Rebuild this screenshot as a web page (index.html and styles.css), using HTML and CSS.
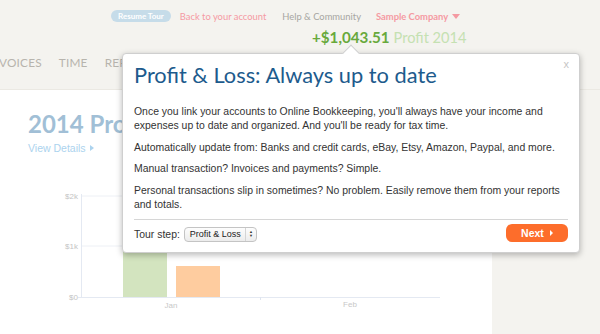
FILE: index.html
```html
<!DOCTYPE html>
<html>
<head>
<meta charset="utf-8">
<link rel="stylesheet" href="styles.css">
</head>
<body>
<div class="page">
  <div class="top">
    <div class="toplinks">
      <span class="pill">Resume Tour</span>
      <span class="back">Back to your account</span>
      <span class="help">Help &amp; Community</span>
      <span class="company">Sample Company <span class="caret"></span></span>
    </div>
    <div class="profit"><span class="amount">+$1,043.51</span> <span class="plabel">Profit 2014</span></div>
    <div class="nav">
      <span class="navitem first">VOICES</span>
      <span class="navitem">TIME</span>
      <span class="navitem">REPORTS</span>
    </div>
  </div>
  <div class="main">
    <div class="panel">
      <div class="head">
        <h1 class="title">2014 Profit &amp; Loss</h1>
        <a class="details">View Details <span class="tri"></span></a>
      </div>
      <svg class="chart" width="492" height="154" viewBox="0 0 492 154">
        <line x1="81" y1="17" x2="440" y2="17" stroke="#edf0f5" stroke-width="1"/>
        <line x1="81" y1="67" x2="440" y2="67" stroke="#edf0f5" stroke-width="1"/>
        <line x1="81.5" y1="15" x2="81.5" y2="119" stroke="#e4e9f2" stroke-width="1"/>
        <rect x="123" y="30" width="44" height="88" fill="#d3e4bf"/>
        <rect x="176" y="87" width="44" height="31" fill="#fecc9f"/>
        <line x1="78" y1="118.5" x2="440" y2="118.5" stroke="#e4e9f2" stroke-width="1"/>
        <line x1="260.5" y1="118" x2="260.5" y2="121" stroke="#dfe5ef" stroke-width="1"/>
        <text x="78" y="20" class="ylab" text-anchor="end">$2k</text>
        <text x="78" y="70" class="ylab" text-anchor="end">$1k</text>
        <text x="78" y="121" class="ylab" text-anchor="end">$0</text>
        <text x="171" y="129" class="xlab" text-anchor="middle">Jan</text>
        <text x="350" y="128" class="xlab" text-anchor="middle">Feb</text>
      </svg>
    </div>
    <div class="side"></div>
  </div>

  <div class="popover">
    <div class="arrow"></div>
    <div class="close">x</div>
    <h2 class="ptitle">Profit &amp; Loss: Always up to date</h2>
    <div class="pbody">
      <p>Once you link your accounts to Online Bookkeeping, you'll always have your income and expenses up to date and organized. And you'll be ready for tax time.</p>
      <p>Automatically update from: Banks and credit cards, eBay, Etsy, Amazon, Paypal, and more.</p>
      <p>Manual transaction? Invoices and payments? Simple.</p>
      <p>Personal transactions slip in sometimes? No problem. Easily remove them from your reports and totals.</p>
    </div>
    <div class="pfoot">
      <div class="step">
        <span class="steplabel">Tour step:</span>
        <span class="select"><span class="selval">Profit &amp; Loss</span><span class="selarrows">&#9650;<br>&#9660;</span></span>
      </div>
      <span class="next">Next <span class="ntri"></span></span>
    </div>
  </div>
</div>
</body>
</html>
```
FILE: styles.css
```css
* { box-sizing: border-box; }
html, body { margin: 0; padding: 0; }
body {
  width: 600px;
  height: 334px;
  overflow: hidden;
  background: #f4f3ef;
  font-family: "Liberation Sans", Arial, sans-serif;
}
.page {
  position: relative;
  width: 600px;
  height: 334px;
  overflow: hidden;
}
.top {
  height: 90px;
  background: #f4f3ef;
  border-bottom: 1px solid #ebe9e3;
}
.toplinks {
  display: flex;
  align-items: center;
  height: 32px;
  padding-left: 111px;
  font-family: Lato, "Open Sans", sans-serif;
  font-size: 9.4px;
}
.pill {
  background: #c6dce9;
  color: #fff;
  font-weight: 700;
  font-size: 8px;
  border-radius: 7px;
  padding: 0 7px;
  height: 12px;
  line-height: 12px;
  margin-right: 9px;
}
.back { color: #f59aa3; margin-right: 16px; }
.help { color: #a7a6a2; margin-right: 15px; }
.company { color: #f49aa2; font-weight: 700; display: flex; align-items: center; }
.caret {
  display: inline-block;
  width: 0; height: 0;
  border-left: 4px solid transparent;
  border-right: 4px solid transparent;
  border-top: 5px solid #f49aa2;
  margin-left: 4px;
}
.profit {
  margin-top: -6px;
  padding-left: 312px;
  font-family: Lato, "Open Sans", sans-serif;
  font-size: 15.2px;
  height: 22px;
  line-height: 22px;
}
.amount { color: #68a93c; font-weight: 700; }
.plabel { color: #c5e1b2; font-size: 14.6px; }
.nav {
  display: flex;
  gap: 17px;
  white-space: nowrap;
  margin-top: 7px;
  font-family: Lato, "Open Sans", sans-serif;
  font-size: 11.8px;
  color: #b7b4ad;
  letter-spacing: 0.2px;
}
.navitem.first { margin-left: -1px; }
.main {
  display: flex;
  height: 244px;
}
.panel {
  width: 492px;
  background: #fff;
}
.side { flex: 1; background: #f4f3ef; }
.head {
  padding: 20px 0 0 28px;
  height: 89px;
  white-space: nowrap;
}
.title {
  margin: 0;
  font-family: Lato, "Open Sans", sans-serif;
  font-weight: 700;
  font-size: 24px;
  line-height: 28px;
  color: #a1bfd6;
}
.details {
  display: inline-flex;
  align-items: center;
  margin-top: 4px;
  font-size: 10.5px;
  color: #acd3ee;
}
.tri {
  display: inline-block;
  width: 0; height: 0;
  border-top: 3px solid transparent;
  border-bottom: 3px solid transparent;
  border-left: 4px solid #acd3ee;
  margin-left: 4px;
}
.chart { display: block; }
.ylab { font-family: "Liberation Sans", Arial, sans-serif; font-size: 8px; fill: #c4c4c4; }
.xlab { font-family: "Liberation Sans", Arial, sans-serif; font-size: 8px; fill: #c8c8c8; }

.popover {
  position: absolute;
  left: 122px;
  top: 53px;
  width: 458px;
  height: 200px;
  background: #fff;
  border: 1px solid #cfcfcf;
  border-radius: 4px;
  box-shadow: 0 2px 6px rgba(0,0,0,0.28);
  padding: 0 11px 0 11px;
}
.arrow {
  position: absolute;
  left: 222px;
  top: -7px;
  width: 12px;
  height: 12px;
  background: #fff;
  border-left: 1px solid #cfcfcf;
  border-top: 1px solid #cfcfcf;
  transform: rotate(45deg);
}
.close {
  position: absolute;
  right: 10px;
  top: 4px;
  font-family: "Liberation Sans", Arial, sans-serif;
  font-size: 11px;
  color: #c6c6c6;
}
.ptitle {
  margin: 0;
  padding-top: 8px;
  font-family: Lato, "Open Sans", sans-serif;
  font-weight: 400;
  font-size: 21.8px;
  line-height: 26px;
  color: #1d5b8d;
}
.pbody {
  margin-top: 17px;
  font-size: 10.45px;
  line-height: 14px;
  color: #333;
}
.pbody p { margin: 0 0 7.5px 0; }
.pfoot {
  border-top: 1px solid #d6d6d6;
  margin-top: 5px;
  padding-top: 5px;
  display: flex;
  justify-content: space-between;
  align-items: center;
}
.step { display: flex; align-items: center; font-size: 10.45px; color: #333; padding-top: 1px; }
.steplabel { margin-right: 4px; }
.select {
  display: inline-flex;
  align-items: stretch;
  height: 15px;
  border: 1px solid #c4c4c4;
  border-radius: 4px;
  background: linear-gradient(#fdfdfd, #ececec);
  font-size: 9px;
  color: #222;
}
.selval { padding: 0 4px 0 5px; line-height: 13px; }
.selarrows {
  border-left: 1px solid #d4d4d4;
  width: 11px;
  text-align: center;
  font-size: 4px;
  line-height: 4px;
  padding-top: 2px;
  color: #333;
}
.next {
  display: inline-flex;
  align-items: center;
  justify-content: center;
  width: 62px;
  height: 18px;
  margin-top: -1px;
  background: #fd6d2b;
  border-radius: 6px;
  color: #fff;
  font-weight: 700;
  font-size: 10.5px;
}
.ntri {
  display: inline-block;
  width: 0; height: 0;
  border-top: 3px solid transparent;
  border-bottom: 3px solid transparent;
  border-left: 3.5px solid #fff;
  margin-left: 6px;
}
```
